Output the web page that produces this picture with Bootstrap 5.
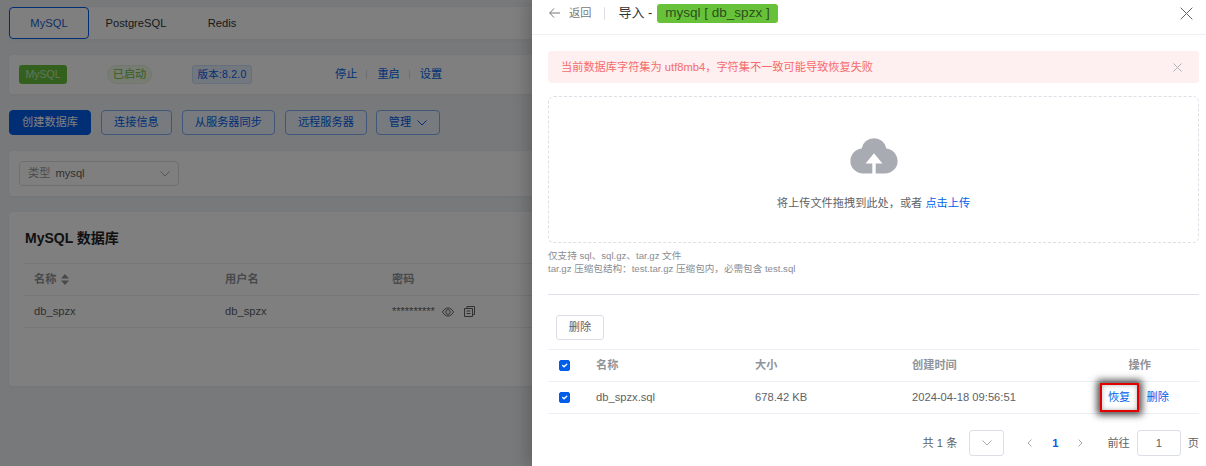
<!DOCTYPE html>
<html lang="zh">
<head>
<meta charset="utf-8">
<title>MySQL 数据库</title>
<link href="https://cdn.jsdelivr.net/npm/bootstrap@5.3.0/dist/css/bootstrap.min.css" rel="stylesheet">
<style>
html,body{height:466px;overflow:hidden}
body{font-family:"Liberation Sans","Noto Sans CJK SC",sans-serif;font-size:11.2px;background:#f0f2f5;color:#606266;position:relative}
a{text-decoration:none}
.page-wrap{padding:7px 9px 0;width:1206px}
.panel{background:#fff;border-radius:4px;box-shadow:0 1px 3px rgba(0,0,0,.04)}
.tab-bar{height:32px;margin-bottom:16px}
.tab-item{height:32px;display:flex;align-items:center;justify-content:center;color:#333;font-size:11.2px;border:1px solid transparent;border-radius:4px}
.tab-active{width:80px;color:#1a5fd0;border-color:#005eeb}
.tab-b{width:94px}
.tab-c{width:78px}
.status-bar{height:39px;margin-bottom:16px;padding-left:10px}
.tag-my{width:48px;height:19px;background:#67c23a;color:#c7e8b5;border-radius:3px;font-size:10.5px}
.tag-run{width:45px;height:19px;margin-left:40px;background:#f0f9eb;border:1px solid #e1f3d8;color:#67c23a;border-radius:10px;font-size:11.2px}
.tag-ver{width:60px;height:19px;margin-left:40px;background:#e6effd;border:1px solid #ccdffb;color:#005eeb;border-radius:3px;font-size:10.5px;letter-spacing:.2px}
.acts{margin-left:83px;color:#005eeb;font-size:11.2px}
.acts i{display:inline-block;width:1px;height:9px;background:#dcdfe6;margin:0 10px 0 9px}
.btn-row{height:25px;margin-bottom:16px;gap:10px}
.tool-btn{height:25px;font-size:11.2px;border:1px solid #82aef3;background:#eef4fe;color:#005eeb;border-radius:4px;padding:0 12px;line-height:23px;white-space:nowrap}
.tool-main{background:#005eeb;border-color:#005eeb;color:#fff;width:82px;padding:0;text-align:center}
.tool-gap{gap:6px;margin-left:-1px}
.filter-bar{height:45px;padding:10px;margin-bottom:16px}
.pick{width:160px;height:25px;border:1px solid #dcdfe6;border-radius:4px;padding:0 8px;color:#999;font-size:11.2px}
.pick b{font-weight:400;color:#606266;margin-left:5px}
.db-panel{height:174px;padding:0 16px}
.db-title{height:51px;padding-top:18px;font-size:14px;font-weight:700;color:#222;margin:0}
.db-table{width:100%;border-top:1px solid #ebeef5;table-layout:fixed}
.db-table th,.db-table td{height:32px;padding:0 0 0 9px;border-bottom:1px solid #ebeef5;font-size:11.2px;color:#606266}
.db-table th{color:#909399;font-weight:700}
.col-n{width:191px}.col-u{width:167px}
.sorter{display:inline-block;vertical-align:-2px;margin-left:5px}
.stars{font-size:11px}
.eye-ico{margin-left:7px}
.copy-ico{margin-left:10px}
.mask{position:absolute;inset:0;background:rgba(0,0,0,.5)}
.drawer{position:absolute;top:0;right:0;bottom:0;width:674px;background:#fff;box-shadow:-6px 0 14px rgba(0,0,0,.18);padding:0 7px 0 16px}
.drawer-head{height:35px;margin:0 -7px 16px -16px;padding:0 13px 8px 17px;border-bottom:1px solid #eff0f3}
.back-txt{color:#777;font-size:11.2px;margin-left:9px}
.vline{width:1px;height:13px;background:#dcdfe6;margin:0 13px}
.head-title{color:#333;font-size:13px}
.name-tag{height:19px;background:#67c23a;color:#2d4f1c;font-size:13.500px;border-radius:3px;padding:0 8px;margin-left:5px;line-height:18px}
.warn{height:32px;background:#feeff0;color:#f56c6c;font-size:11.2px;border-radius:4px;padding:0 13px;margin-bottom:13px}
.drop{height:147px;border:1px dashed #dcdfe6;border-radius:6px;padding-top:38px}
.cloud{margin-top:-7px}
.drop-txt{font-size:11.2px;color:#606266;margin-top:13px}
.drop-txt a{color:#005eeb}
.hint{font-size:9.600px;line-height:13px;color:#8a8d94;margin:6px 0 19px}
.rule{height:1px;background:#dfe1e8;margin-bottom:20px}
.del-btn{width:48px;height:25px;border:1px solid #dcdfe6;border-radius:3px;background:#fff;color:#606266;font-size:11.2px;margin-left:8px;margin-bottom:9px;padding:0}
.file-table{width:100%;table-layout:fixed;border-top:1px solid #ebeef5}
.file-table th,.file-table td{height:32px;padding:0;border-bottom:1px solid #ebeef5;font-size:11.2px;color:#606266}
.file-table th{color:#909399;font-weight:700}
.c-check{width:48px}.c-name{width:159px}.c-size{width:157px}.c-time{width:170px}
.form-check-input.tick[type=checkbox]{width:11px;height:11px;margin:0 0 0 11px;background-color:#005eeb;border-color:#005eeb;display:block;border-radius:2px;background-size:9px}
.file-table th.op-head{padding-right:48px}
.file-table td.op-cell{padding-right:30px}
.mark-box{display:inline-block;width:39px;height:29px;line-height:25px;text-align:center;border:2px solid #e00000;box-shadow:0 0 7px 3px rgba(0,0,0,.7),inset 0 0 5px rgba(0,0,0,.3);color:#005eeb;background:#fff;vertical-align:middle}
.op-del{color:#005eeb;margin-left:8px;vertical-align:middle}
.pager{height:26px;margin-top:16px;justify-content:flex-end;font-size:11.2px;color:#606266}
.size-pick{width:35px;height:26px;border:1px solid #dcdfe6;border-radius:3px;margin:0 23px 0 12px}
.pg-num{color:#005eeb;font-weight:700;width:46px;text-align:center}
.pg-go{margin-left:24px}
.pg-in{width:44px;height:26px;border:1px solid #dcdfe6;border-radius:3px;margin:0 7px}
.ico{display:block;flex:none}
</style>
</head>
<body>
<div class="page-wrap">
  <div class="panel tab-bar d-flex">
    <div class="tab-item tab-active">MySQL</div>
    <div class="tab-item tab-b">PostgreSQL</div>
    <div class="tab-item tab-c">Redis</div>
  </div>
  <div class="panel status-bar d-flex align-items-center">
    <span class="tag-my d-flex align-items-center justify-content-center">MySQL</span>
    <span class="tag-run d-flex align-items-center justify-content-center">已启动</span>
    <span class="tag-ver d-flex align-items-center justify-content-center">版本:8.2.0</span>
    <span class="acts d-flex align-items-center">停止<i></i>重启<i></i>设置</span>
  </div>
  <div class="btn-row d-flex">
    <span class="tool-btn tool-main">创建数据库</span>
    <span class="tool-btn">连接信息</span>
    <span class="tool-btn">从服务器同步</span>
    <span class="tool-btn">远程服务器</span>
    <span class="tool-btn tool-gap d-flex align-items-center">管理
      <svg class="ico" width="10" height="6" viewBox="0 0 10 6" fill="none" stroke="#005eeb"><path d="M.5.5 5 5 9.500.5"/></svg></span>
  </div>
  <div class="panel filter-bar">
    <div class="pick d-flex align-items-center justify-content-between">
      <span>类型<b>mysql</b></span>
      <svg class="ico" width="10" height="6" viewBox="0 0 10 6" fill="none" stroke="#aaa"><path d="M.5.5 5 5 9.500.5"/></svg>
    </div>
  </div>
  <div class="panel db-panel">
    <h5 class="db-title">MySQL 数据库</h5>
    <table class="db-table">
      <thead><tr>
        <th class="col-n">名称<svg class="sorter" width="8" height="11" viewBox="0 0 8 11" fill="#909399"><path d="M4 0 8 4.500H0zM0 6.500H8L4 11z"/></svg></th>
        <th class="col-u">用户名</th><th>密码</th>
      </tr></thead>
      <tbody><tr>
        <td>db_spzx</td><td>db_spzx</td>
        <td><div class="d-flex align-items-center">
          <span class="stars">**********</span>
          <svg class="ico eye-ico" width="12" height="10" viewBox="0 0 12 10" fill="none" stroke="#606266"><path d="M.5 5C2 2 4 1 6 1s4 1 5.500 4C10 8 8 9 6 9S2 8 .5 5z"/><circle cx="6" cy="5" r="2.300"/></svg>
          <svg class="ico copy-ico" width="11" height="11" viewBox="0 0 11 11" fill="none" stroke="#606266"><path d="M3 2V.5h7.500v8H9"/><path d="M.5 2.500h8v8h-8zM2.500 5h4M2.500 7.500h4"/></svg>
        </div></td>
      </tr></tbody>
    </table>
  </div>
</div>
<div class="mask"></div>
<aside class="drawer">
  <div class="drawer-head d-flex align-items-center">
    <svg class="ico" width="11" height="10" viewBox="0 0 11 10" fill="none" stroke="#777"><path d="M5 .5.700 5 5 9.500M.7 5H11"/></svg>
    <span class="back-txt">返回</span><span class="vline"></span>
    <span class="head-title">导入 -</span><span class="name-tag">mysql [ db_spzx ]</span>
    <svg class="ico ms-auto" width="13" height="13" viewBox="0 0 13 13" fill="none" stroke="#606266"><path d="m.7.700 11.600 11.600M12.300.7.700 12.300"/></svg>
  </div>
  <div class="warn d-flex align-items-center justify-content-between">
    <span>当前数据库字符集为 utf8mb4，字符集不一致可能导致恢复失败</span>
    <svg class="ico me-1" width="9" height="9" viewBox="0 0 9 9" fill="none" stroke="#b0b3ba"><path d="m.5.500 8 8M8.500.5l-8 8"/></svg>
  </div>
  <div class="drop text-center">
    <svg class="d-block mx-auto cloud" width="54" height="54" viewBox="0 0 1024 1024" fill="#a8abb2"><path d="M544 864V672h128L512 480 352 672h128v192H320v-1.600c-5.376.32-10.496 1.600-16 1.600A240 240 0 0 1 64 624c0-123.136 93.120-223.488 212.608-237.248A239.808 239.808 0 0 1 512 192a239.872 239.872 0 0 1 235.456 194.752c119.488 13.760 212.480 114.112 212.480 237.248a240 240 0 0 1-240 240c-5.376 0-10.560-1.280-16-1.600v1.600H544z"/></svg>
    <div class="drop-txt">将上传文件拖拽到此处，或者 <a href="#">点击上传</a></div>
  </div>
  <div class="hint">仅支持 sql、sql.gz、tar.gz 文件<br>tar.gz 压缩包结构：test.tar.gz 压缩包内，必需包含 test.sql</div>
  <div class="rule"></div>
  <button class="del-btn d-block">删除</button>
  <table class="file-table">
    <thead><tr>
      <th class="c-check"><input class="form-check-input tick" type="checkbox" checked aria-label="全选"></th>
      <th class="c-name">名称</th><th class="c-size">大小</th><th class="c-time">创建时间</th>
      <th class="text-end op-head">操作</th>
    </tr></thead>
    <tbody><tr>
      <td><input class="form-check-input tick" type="checkbox" checked aria-label="选择"></td>
      <td>db_spzx.sql</td><td>678.42 KB</td><td>2024-04-18 09:56:51</td>
      <td class="text-end op-cell"><span class="mark-box">恢复</span><a class="op-del" href="#">删除</a></td>
    </tr></tbody>
  </table>
  <div class="pager d-flex align-items-center">
    <span>共 1 条</span>
    <span class="size-pick d-flex align-items-center justify-content-center"><svg class="ico" width="10" height="6" viewBox="0 0 10 6" fill="none" stroke="#aaa"><path d="M.5.5 5 5 9.500.5"/></svg></span>
    <svg class="ico" width="5" height="8" viewBox="0 0 5 8" fill="none" stroke="#aaa"><path d="M4.500.5 1 4l3.500 3.500"/></svg>
    <span class="pg-num">1</span>
    <svg class="ico" width="5" height="8" viewBox="0 0 5 8" fill="none" stroke="#aaa"><path d="M.5.5 4 4 .5 7.500"/></svg>
    <span class="pg-go">前往</span>
    <span class="pg-in d-flex align-items-center justify-content-center">1</span>
    <span>页</span>
  </div>
</aside>
<script src="https://cdn.jsdelivr.net/npm/bootstrap@5.3.0/dist/js/bootstrap.bundle.min.js"></script>
</body>
</html>
